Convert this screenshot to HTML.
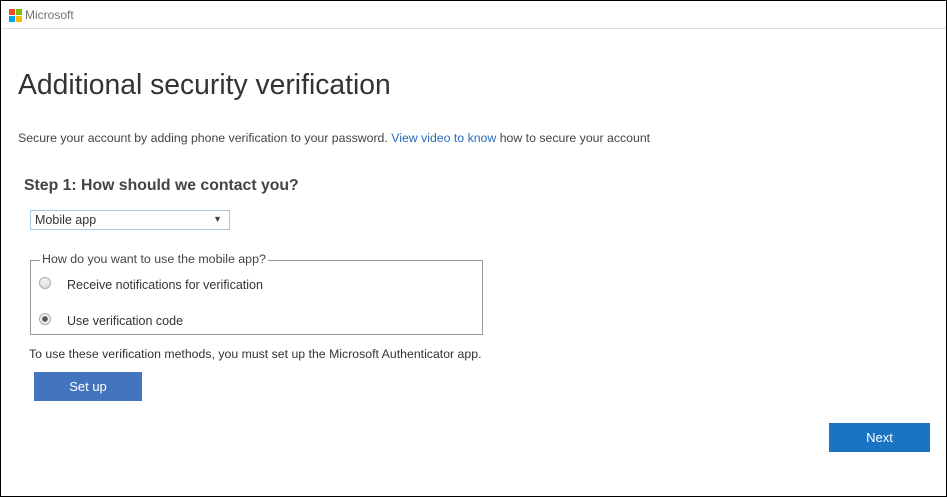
<!DOCTYPE html>
<html><head><style>
*{margin:0;padding:0;box-sizing:border-box}
body{width:947px;height:497px;overflow:hidden;background:#fff;font-family:"Liberation Sans",sans-serif;color:#333}
.frame{position:absolute;left:0;top:0;width:947px;height:497px;border:1px solid #000}
.abs{position:absolute;white-space:nowrap}
</style></head><body>
<div class="frame"></div>
<div class="abs" style="left:9px;top:9px;width:13px;height:13px">
<div class="abs" style="left:0;top:0;width:6px;height:6px;background:#f25022"></div>
<div class="abs" style="left:7px;top:0;width:6px;height:6px;background:#7fba00"></div>
<div class="abs" style="left:0;top:7px;width:6px;height:6px;background:#00a4ef"></div>
<div class="abs" style="left:7px;top:7px;width:6px;height:6px;background:#ffb900"></div>
</div>
<div class="abs" style="left:25px;top:8px;font-size:12px;color:#737373">Microsoft</div>
<div class="abs" style="left:1px;top:28px;width:945px;height:1px;background:#ddd"></div>
<div class="abs" style="left:18px;top:68px;font-size:28.3px;color:#333;font-weight:300">Additional security verification</div>
<div class="abs" style="left:18px;top:131px;font-size:12.3px;color:#444">Secure your account by adding phone verification to your password. <span style="color:#2a6bb5">View video to know</span> how to secure your account</div>
<div class="abs" style="left:24px;top:177px;font-size:15.8px;font-weight:bold;color:#444">Step 1: How should we contact you?</div>
<div class="abs" style="left:30px;top:210px;width:200px;height:20px;border:1px solid #a9c6e4;font-size:12.5px;padding:2px 4px;color:#333">Mobile app<span style="position:absolute;right:7px;top:3px;font-size:9px;color:#444">▼</span></div>
<div class="abs" style="left:30px;top:260px;width:453px;height:75px;border:1px solid #999"></div>
<div class="abs" style="left:40px;top:252px;font-size:12.4px;background:#fff;padding:0 2px;color:#444">How do you want to use the mobile app?</div>
<div class="abs" style="left:39px;top:277px;width:12px;height:12px;border-radius:50%;border:1px solid #aaa;background:linear-gradient(#f4f4f4,#ddd)"></div>
<div class="abs" style="left:67px;top:278px;font-size:12.5px;color:#333">Receive notifications for verification</div>
<div class="abs" style="left:39px;top:313px;width:12px;height:12px;border-radius:50%;border:1px solid #aaa;background:radial-gradient(circle,#555 0 2.5px,#eee 3px)"></div>
<div class="abs" style="left:67px;top:314px;font-size:12.5px;color:#333">Use verification code</div>
<div class="abs" style="left:29px;top:347px;font-size:12.3px;color:#333">To use these verification methods, you must set up the Microsoft Authenticator app.</div>
<div class="abs" style="left:34px;top:372px;width:108px;height:29px;background:#4275bd;color:#fff;font-size:13px;text-align:center;line-height:29px">Set up</div>
<div class="abs" style="left:829px;top:423px;width:101px;height:29px;background:#1a74c4;color:#fff;font-size:13px;text-align:center;line-height:29px">Next</div>
</body></html>
